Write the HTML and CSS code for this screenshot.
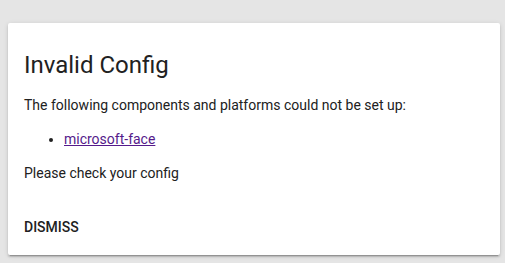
FILE: index.html
```html
<!DOCTYPE html>
<html>
<head>
<meta charset="utf-8">
<link rel="stylesheet" href="styles.css">
</head>
<body>
<div class="card">
  <div class="card-content">
    <h2 class="title">Invalid Config</h2>
    <p>The following components and platforms could not be set up:</p>
    <ul class="list">
      <li><a class="link" href="#">microsoft-face</a></li>
    </ul>
    <p>Please check your config</p>
  </div>
  <div class="card-actions">
    <span class="button">Dismiss</span>
  </div>
</div>
</body>
</html>
```

FILE: styles.css
```css
html, body {
  margin: 0;
  padding: 0;
}
body {
  background: #e5e5e5;
  font-family: Roboto, "Noto Sans", sans-serif;
  color: #212121;
  width: 505px;
  height: 263px;
  overflow: hidden;
  padding: 23px 5px 0 8px;
  box-sizing: border-box;
}
.card {
  background: #fff;
  border-radius: 2px;
  box-shadow: 0 2px 2px 0 rgba(0,0,0,.14), 0 1px 5px 0 rgba(0,0,0,.12), 0 3px 1px -2px rgba(0,0,0,.2);
  height: 232px;
  box-sizing: border-box;
}
.card-content {
  padding: 26px 16px 0;
}
.title {
  margin: 0;
  font-size: 24px;
  line-height: 32px;
  font-weight: 400;
}
p {
  margin: 14px 0;
  font-size: 14px;
  line-height: 20px;
}
.list {
  margin: 14px 0;
  padding-left: 40px;
  font-size: 14px;
  line-height: 20px;
}
.link {
  color: #551a8b;
}
.card-actions {
  padding: 20px 16px 0;
}
.button {
  display: block;
  font-size: 14px;
  line-height: 20px;
  font-weight: 500;
  text-transform: uppercase;
}
```
